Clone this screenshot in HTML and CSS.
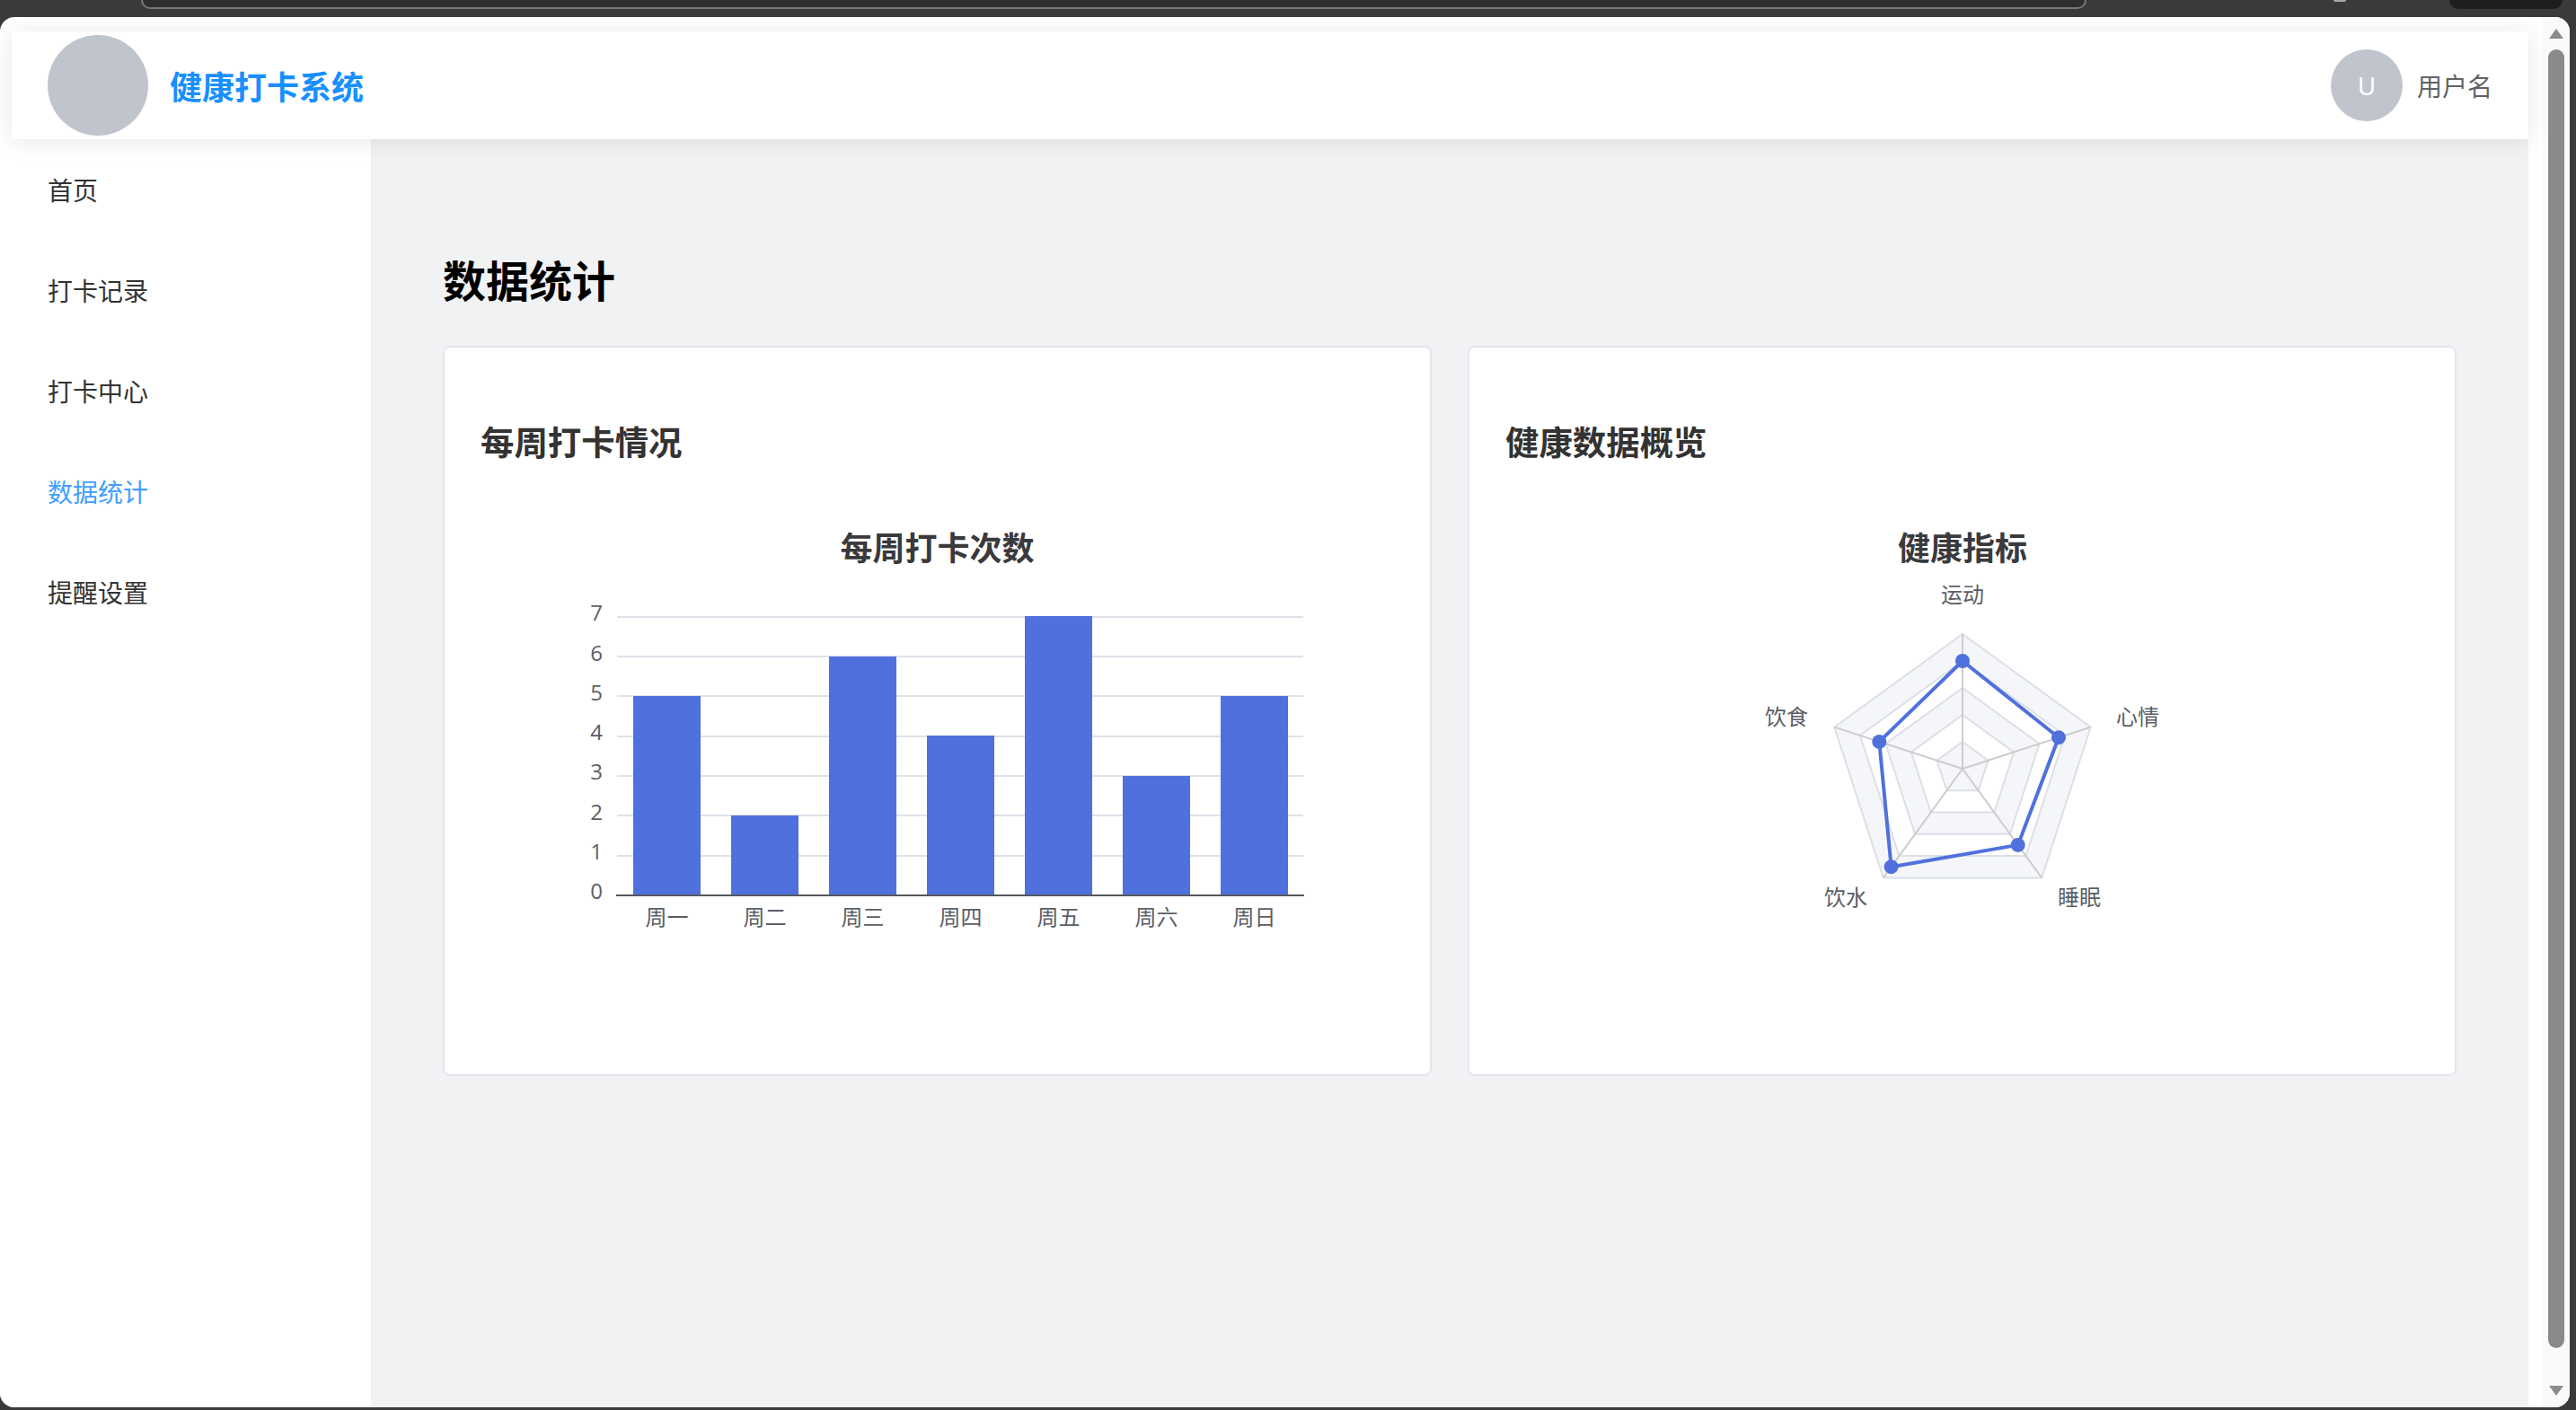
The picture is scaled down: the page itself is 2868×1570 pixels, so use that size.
FILE: index.html
```html
<!DOCTYPE html>
<html lang="zh-CN">
  <head>
    <meta charset="utf-8">
    <title>健康打卡系统</title>
    <link rel="stylesheet" href="styles.css">
  </head>
  <body>
  <div class="browser-top">
    <div class="address-bar"></div>
    <div class="top-blip"></div>
    <div class="top-pill"></div>
  </div>

  <div class="window">
    <div class="page">
      <header class="header">
        <div class="logo"></div>
        <div class="site-title">健康打卡系统</div>
        <div class="user-box">
          <div class="avatar">U</div>
          <span class="user-name">用户名</span>
        </div>
      </header>

      <div class="layout">
        <nav class="sidebar">
          <a class="nav-item">首页</a>
          <a class="nav-item">打卡记录</a>
          <a class="nav-item">打卡中心</a>
          <a class="nav-item active">数据统计</a>
          <a class="nav-item">提醒设置</a>
        </nav>

        <main class="main-content">
          <h2 class="page-title">数据统计</h2>
          <div class="card-grid">
            <section class="card">
              <h3 class="card-title">每周打卡情况</h3>
              <svg class="chart" viewBox="0 0 1017 600">
                <text class="chart-title" x="508.5" y="70">每周打卡次数</text>

                <g class="grid-lines">
                  <line x1="152" x2="916" y1="133" y2="133"/>
                  <line x1="152" x2="916" y1="177" y2="177"/>
                  <line x1="152" x2="916" y1="221" y2="221"/>
                  <line x1="152" x2="916" y1="266" y2="266"/>
                  <line x1="152" x2="916" y1="310" y2="310"/>
                  <line x1="152" x2="916" y1="354" y2="354"/>
                  <line x1="152" x2="916" y1="399" y2="399"/>
                </g>

                <g class="bars">
                  <rect x="170" y="221" width="75" height="221"/>
                  <rect x="279" y="354" width="75" height="88"/>
                  <rect x="388" y="177" width="75" height="265"/>
                  <rect x="497" y="265" width="75" height="177"/>
                  <rect x="606" y="132" width="75" height="310"/>
                  <rect x="715" y="310" width="75" height="132"/>
                  <rect x="824" y="221" width="75" height="221"/>
                </g>

                <line class="axis-line" x1="151" x2="917" y1="443" y2="443"/>

                <g class="y-labels">
                  <text x="136" y="137">7</text>
                  <text x="136" y="182">6</text>
                  <text x="136" y="226">5</text>
                  <text x="136" y="270">4</text>
                  <text x="136" y="314">3</text>
                  <text x="136" y="359">2</text>
                  <text x="136" y="403">1</text>
                  <text x="136" y="447">0</text>
                </g>

                <g class="x-labels">
                  <text x="207.5" y="476">周一</text>
                  <text x="316.5" y="476">周二</text>
                  <text x="425.5" y="476">周三</text>
                  <text x="534.5" y="476">周四</text>
                  <text x="643.5" y="476">周五</text>
                  <text x="752.5" y="476">周六</text>
                  <text x="861.5" y="476">周日</text>
                </g>
              </svg>
            </section>

            <section class="card">
              <h3 class="card-title">健康数据概览</h3>
              <svg class="chart" viewBox="0 0 1017 600">
                <text class="chart-title" x="509" y="70">健康指标</text>

                <!-- rings, outside in -->
                <path class="ring-fill" fill-rule="evenodd" d="M509 152L651.7 255.6L597.2 423.4L420.8 423.4L366.3 255.6ZM509 182L623.1 264.9L579.5 399.1L438.5 399.1L394.9 264.9Z"/>
                <path class="ring-fill" fill-rule="evenodd" d="M509 212L594.6 274.2L561.9 374.8L456.1 374.8L423.4 274.2ZM509 242L566.1 283.5L544.3 350.5L473.7 350.5L451.9 283.5Z"/>
                <path class="ring-fill" d="M509 272L537.5 292.7L526.6 326.3L491.4 326.3L480.5 292.7Z"/>

                <g class="ring-lines">
                  <polygon points="509,152 651.7,255.6 597.2,423.4 420.8,423.4 366.3,255.6"/>
                  <polygon points="509,182 623.1,264.9 579.5,399.1 438.5,399.1 394.9,264.9"/>
                  <polygon points="509,212 594.6,274.2 561.9,374.8 456.1,374.8 423.4,274.2"/>
                  <polygon points="509,242 566.1,283.5 544.3,350.5 473.7,350.5 451.9,283.5"/>
                  <polygon points="509,272 537.5,292.7 526.6,326.3 491.4,326.3 480.5,292.7"/>
                </g>

                <g class="spokes">
                  <line x1="509" y1="302" x2="509" y2="152"/>
                  <line x1="509" y1="302" x2="651.7" y2="255.6"/>
                  <line x1="509" y1="302" x2="597.2" y2="423.4"/>
                  <line x1="509" y1="302" x2="420.8" y2="423.4"/>
                  <line x1="509" y1="302" x2="366.3" y2="255.6"/>
                </g>

                <polygon class="radar-line" points="509,182 616,267.2 570.7,386.9 429.6,411.2 416.3,271.9"/>
                <g class="radar-dots">
                  <circle cx="509" cy="182" r="8"/>
                  <circle cx="616" cy="267.2" r="8"/>
                  <circle cx="570.7" cy="386.9" r="8"/>
                  <circle cx="429.6" cy="411.2" r="8"/>
                  <circle cx="416.3" cy="271.9" r="8"/>
                </g>

                <g class="x-labels">
                  <text x="509" y="117">运动</text>
                  <text x="704" y="253">心情</text>
                  <text x="639" y="454">睡眠</text>
                  <text x="379" y="454">饮水</text>
                  <text x="313" y="253">饮食</text>
                </g>
              </svg>
            </section>
          </div>
        </main>
      </div>
    </div>

    <div class="scrollbar">
      <div class="arrow-up"></div>
      <div class="thumb"></div>
      <div class="arrow-down"></div>
    </div>
  </div>
  </body>
</html>
```

FILE: styles.css
```css
:root {
  --frame: #3a3a3a;
  --primary: #1890ff;
  --active: #409eff;
  --text: #333333;
  --muted: #606266;
  --avatar: #c0c4cc;
  --page-bg: #f1f2f4;
  --bar: #5070dd;
  --axis-text: #5c5e66;
}

* {
  margin: 0;
  padding: 0;
  box-sizing: border-box;
  font-family: "Noto Sans CJK SC", "Noto Sans", sans-serif;
}

html, body {
  height: 100%;
  overflow: hidden;
}

body {
  background: var(--frame);
}

/* browser chrome peeking in at the top */
.browser-top {
  display: flex;
  align-items: flex-start;
  height: 19px;
}

.address-bar {
  width: 2166px;
  height: 10px;
  margin-left: 157px;
  background: #2e2e2e;
  border-bottom: 2px solid #767676;
  border-left: 2px solid #767676;
  border-right: 2px solid #767676;
  border-radius: 0 0 24px 24px;
}

.top-blip {
  width: 14px;
  height: 2px;
  margin-left: 275px;
  background: #a8a8a8;
  border-radius: 0 0 7px 7px;
}

.top-pill {
  width: 126px;
  height: 10px;
  margin-left: 115px;
  background: #1e1e1e;
  border-radius: 0 0 16px 16px;
}

.window {
  display: flex;
  width: 2861px;
  height: 1548px;
  background: #ffffff;
  border-radius: 16px;
  overflow: hidden;
}

.page {
  flex: 1;
  display: flex;
  flex-direction: column;
  padding-top: 16px;
  min-width: 0;
}

.header {
  position: relative;
  z-index: 2;
  display: flex;
  align-items: center;
  height: 120px;
  margin-left: 13px;
  margin-right: 16px;
  padding: 0 40px;
  background: #ffffff;
  box-shadow: 0 2px 24px rgba(0,0,0,0.1);
}

.logo {
  width: 112px;
  height: 112px;
  border-radius: 50%;
  background: var(--avatar);
}

.site-title {
  margin-left: 24px;
  font-size: 36px;
  font-weight: 700;
  color: var(--primary);
}

.user-box {
  display: flex;
  align-items: center;
  gap: 16px;
  margin-left: auto;
}

.avatar {
  display: flex;
  align-items: center;
  justify-content: center;
  width: 80px;
  height: 80px;
  border-radius: 50%;
  background: var(--avatar);
  color: #ffffff;
  font-size: 28px;
  font-family: "Noto Sans", sans-serif;
}

.user-name {
  font-size: 28px;
  color: var(--muted);
}

.layout {
  flex: 1;
  display: flex;
  min-height: 0;
}

.sidebar {
  width: 413px;
  background: #ffffff;
}

.nav-item {
  display: block;
  height: 112px;
  padding-left: 53px;
  font-size: 28px;
  line-height: 112px;
  color: var(--text);
}

.nav-item.active {
  color: var(--active);
}

.main-content {
  flex: 1;
  margin-right: 16px;
  padding: 122px 80px 0;
  background: var(--page-bg);
}

.page-title {
  height: 66px;
  margin-bottom: 42px;
  font-size: 48px;
  font-weight: 700;
  line-height: 66px;
  color: #000000;
}

.card-grid {
  display: grid;
  grid-template-columns: 1fr 1fr;
  gap: 40px;
}

.card {
  height: 813px;
  padding: 40px;
  background: #ffffff;
  border: 2px solid #e4e7ed;
  border-radius: 8px;
}

.card-title {
  margin: 39px 0 38px;
  font-size: 37.44px;
  font-weight: 700;
  line-height: 50px;
  color: var(--text);
}

.chart {
  display: block;
  width: 100%;
  height: 600px;
}

.chart-title {
  font-size: 36px;
  font-weight: 700;
  fill: #3a3a3c;
  text-anchor: middle;
}

.grid-lines line {
  stroke: #dde1e8;
  stroke-width: 2;
}

.bars rect {
  fill: var(--bar);
}

.axis-line {
  stroke: #55575e;
  stroke-width: 2;
}

.y-labels text {
  font-family: "Open Sans", sans-serif;
  font-size: 24px;
  fill: var(--axis-text);
  text-anchor: end;
}

.x-labels text {
  font-size: 24px;
  fill: var(--axis-text);
  text-anchor: middle;
}

.ring-fill {
  fill: #f4f6fa;
}

.ring-lines polygon {
  fill: none;
  stroke: #dcdfe6;
  stroke-width: 2;
}

.spokes line {
  stroke: #cccccc;
  stroke-width: 2;
}

.radar-line {
  fill: none;
  stroke: var(--bar);
  stroke-width: 4;
  stroke-linejoin: round;
}

.radar-dots circle {
  fill: var(--bar);
}

/* window scrollbar */
.scrollbar {
  position: relative;
  width: 30px;
  background: #fafafa;
}

.thumb {
  position: absolute;
  top: 36px;
  left: 6px;
  width: 18px;
  height: 1446px;
  background: #8a8a8a;
  border-radius: 9px;
}

.arrow-up,
.arrow-down {
  position: absolute;
  left: 7px;
  width: 0;
  height: 0;
  border-left: 8px solid transparent;
  border-right: 8px solid transparent;
}

.arrow-up {
  top: 13px;
  border-bottom: 11px solid #8a8a8a;
}

.arrow-down {
  bottom: 13px;
  border-top: 11px solid #8a8a8a;
}
```
